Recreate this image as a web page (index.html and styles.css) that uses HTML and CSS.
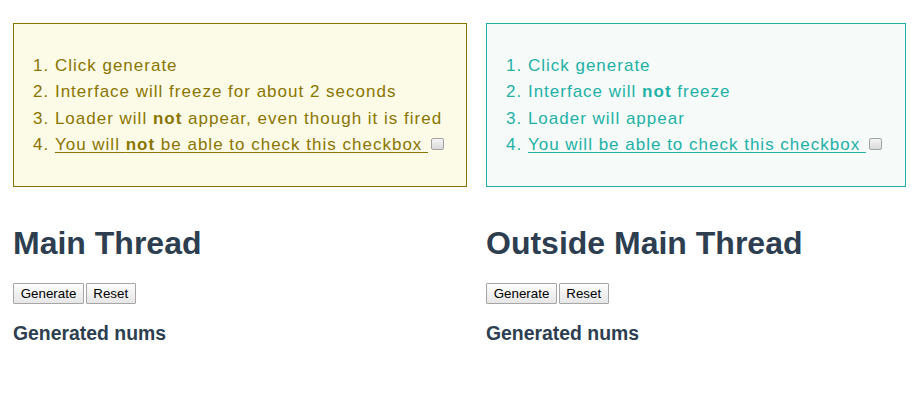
FILE: index.html
```html
<!DOCTYPE html>
<html>
<head>
<meta charset="utf-8">
<link rel="stylesheet" href="styles.css">
</head>
<body>
<div class="page">
  <section class="col col-main">
    <div class="note note-warn">
      <ol class="steps">
        <li>Click generate</li>
        <li>Interface will freeze for about 2 seconds</li>
        <li>Loader will <b>not</b> appear, even though it is fired</li>
        <li><label class="check">You will <b>not</b> be able to check this checkbox <input type="checkbox" class="box"></label></li>
      </ol>
    </div>
    <h1 class="title">Main Thread</h1>
    <div class="actions"><button class="btn">Generate</button><button class="btn">Reset</button></div>
    <h3 class="sub">Generated nums</h3>
  </section>
  <section class="col col-worker">
    <div class="note note-ok">
      <ol class="steps">
        <li>Click generate</li>
        <li>Interface will <b>not</b> freeze</li>
        <li>Loader will appear</li>
        <li><label class="check">You will be able to check this checkbox <input type="checkbox" class="box"></label></li>
      </ol>
    </div>
    <h1 class="title">Outside Main Thread</h1>
    <div class="actions"><button class="btn">Generate</button><button class="btn">Reset</button></div>
    <h3 class="sub">Generated nums</h3>
  </section>
</div>
</body>
</html>
```

FILE: styles.css
```css
html, body {
  margin: 0;
  padding: 0;
  background: #ffffff;
}
body {
  font-family: "Liberation Sans", Arial, Helvetica, sans-serif;
  color: #2c3e50;
}
.page {
  display: flex;
  align-items: flex-start;
  gap: 19px;
  padding: 23px 0 0 13px;
}
.col-main {
  width: 454px;
}
.col-worker {
  width: 420px;
}
.note {
  box-sizing: border-box;
  height: 164px;
  border: 1px solid;
  padding: 28.5px 10px 0 19px;
}
.note-warn {
  color: #8b7500;
  border-color: #8b7500;
  background: #fcfbe7;
}
.note-ok {
  color: #22b1a6;
  border-color: #22b1a6;
  background: #f6fbfa;
}
.steps {
  margin: 0;
  padding: 0;
  list-style: decimal inside;
  font-size: 17px;
  letter-spacing: 1px;
  line-height: 26.67px;
}
.steps li {
  height: 26.67px;
  white-space: nowrap;
}
.check {
  text-decoration: underline;
  text-underline-offset: 2px;
}
.box {
  -webkit-appearance: none;
  appearance: none;
  box-sizing: border-box;
  width: 13px;
  height: 12px;
  margin: 0 0 0 3px;
  border: 1px solid #a3a3a3;
  border-radius: 2px;
  background: linear-gradient(#f4f4f4, #dadada);
  vertical-align: 0;
}
.title {
  margin: 36px 0 20px;
  font-size: 32px;
  line-height: 40px;
  font-weight: bold;
}
.actions {
  display: flex;
  gap: 1.5px;
  height: 21px;
}
.btn {
  box-sizing: border-box;
  height: 21px;
  margin: 0;
  padding: 0 6.75px;
  font-family: "Liberation Sans", Arial, sans-serif;
  font-size: 13.33px;
  color: #000;
  border: 1px solid #a6a6a6;
  border-radius: 1px;
  background: linear-gradient(#fdfdfd, #e6e6e6);
}
.sub {
  margin: 17px 0 0;
  font-size: 19.4px;
  line-height: 24px;
  font-weight: bold;
}
```
